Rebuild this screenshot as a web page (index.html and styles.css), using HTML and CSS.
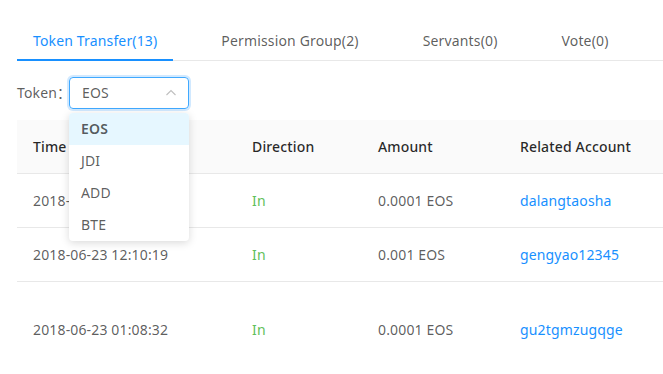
FILE: index.html
```html
<!DOCTYPE html>
<html>
<head>
<meta charset="utf-8">
<link rel="stylesheet" href="styles.css">
</head>
<body>
<div class="page">
  <div class="tabs">
    <div class="tab active">Token Transfer(13)</div>
    <div class="tab">Permission Group(2)</div>
    <div class="tab">Servants(0)</div>
    <div class="tab">Vote(0)</div>
  </div>
  <div class="toolbar">
    <span class="label">Token：</span>
    <div class="select-wrap">
      <div class="select">
        <span class="select-value">EOS</span>
        <svg class="chevron" width="12" height="12" viewBox="0 0 12 12"><path d="M1.5 8 L6 3.5 L10.5 8" fill="none" stroke="#bfbfbf" stroke-width="1.1"/></svg>
      </div>
      <ul class="menu">
        <li class="item selected">EOS</li>
        <li class="item">JDI</li>
        <li class="item">ADD</li>
        <li class="item">BTE</li>
      </ul>
    </div>
  </div>
  <div class="table">
    <div class="row head">
      <div class="c c1">Time</div>
      <div class="c c2">Direction</div>
      <div class="c c3">Amount</div>
      <div class="c c4">Related Account</div>
    </div>
    <div class="row">
      <div class="c c1">2018-06-23 12:10:19</div>
      <div class="c c2 dir">In</div>
      <div class="c c3">0.0001 EOS</div>
      <div class="c c4 link">dalangtaosha</div>
    </div>
    <div class="row">
      <div class="c c1">2018-06-23 12:10:19</div>
      <div class="c c2 dir">In</div>
      <div class="c c3">0.001 EOS</div>
      <div class="c c4 link">gengyao12345</div>
    </div>
    <div class="row tall">
      <div class="c c1">2018-06-23 01:08:32</div>
      <div class="c c2 dir">In</div>
      <div class="c c3">0.0001 EOS</div>
      <div class="c c4 link">gu2tgmzugqge</div>
    </div>
  </div>
</div>
</body>
</html>
```

FILE: styles.css
```css
* { box-sizing: border-box; }
html, body { margin: 0; padding: 0; background: #fff; overflow: hidden; }
body {
  font-family: "Noto Sans", "Noto Sans CJK SC", sans-serif;
  font-size: 14px;
  line-height: 22px;
  letter-spacing: 0.15px;
  color: rgba(0,0,0,0.65);
}
.page { padding: 16px 0 0 17px; width: 663px; height: 374px; }
.tabs {
  display: flex;
  border-bottom: 1px solid #e8e8e8;
}
.tab {
  position: relative;
  padding: 14px 16px 8px;
  margin-right: 32px;
  color: rgba(0,0,0,0.65);
  white-space: nowrap;
}
.tab.active { color: #1890ff; }
.tab.active::after {
  content: "";
  position: absolute;
  left: 0; right: 0; bottom: -1px;
  height: 2px;
  background: #1890ff;
}
.toolbar {
  display: flex;
  align-items: center;
  margin-top: 16px;
}
.label { width: 52px; color: rgba(0,0,0,0.65); white-space: nowrap; }
.select-wrap { position: relative; }
.select {
  width: 120px;
  height: 32px;
  border: 1px solid #40a9ff;
  border-radius: 4px;
  box-shadow: 0 0 0 2px rgba(24,144,255,0.2);
  display: flex;
  align-items: center;
  justify-content: space-between;
  padding: 0 11px 0 12px;
  color: rgba(0,0,0,0.65);
}
.chevron { display: block; }
.menu {
  position: absolute;
  z-index: 5;
  left: 0; top: 36px;
  width: 120px;
  margin: 0; padding: 0;
  list-style: none;
  background: #fff;
  border-radius: 4px;
  box-shadow: 0 2px 8px rgba(0,0,0,0.15);
  overflow: hidden;
}
.item {
  height: 32px;
  line-height: 32px;
  padding: 0 12px;
  color: rgba(0,0,0,0.65);
}
.item.selected { background: #e6f7ff; font-weight: 600; }
.table { margin-top: 11px; width: 646px; }
.row {
  display: flex;
  align-items: center;
  height: 54px;
  border-bottom: 1px solid #e8e8e8;
}
.row.head { background: #fafafa; color: rgba(0,0,0,0.85); font-weight: 500; }
.row.tall { height: 95px; border-bottom: none; }
.c { padding: 0 16px; white-space: nowrap; }
.c1 { width: 219px; }
.c2 { width: 126px; }
.c3 { width: 142px; }
.c4 { flex: 1; }
.dir { color: #5fbf5a; }
.link { color: #1890ff; }
```
